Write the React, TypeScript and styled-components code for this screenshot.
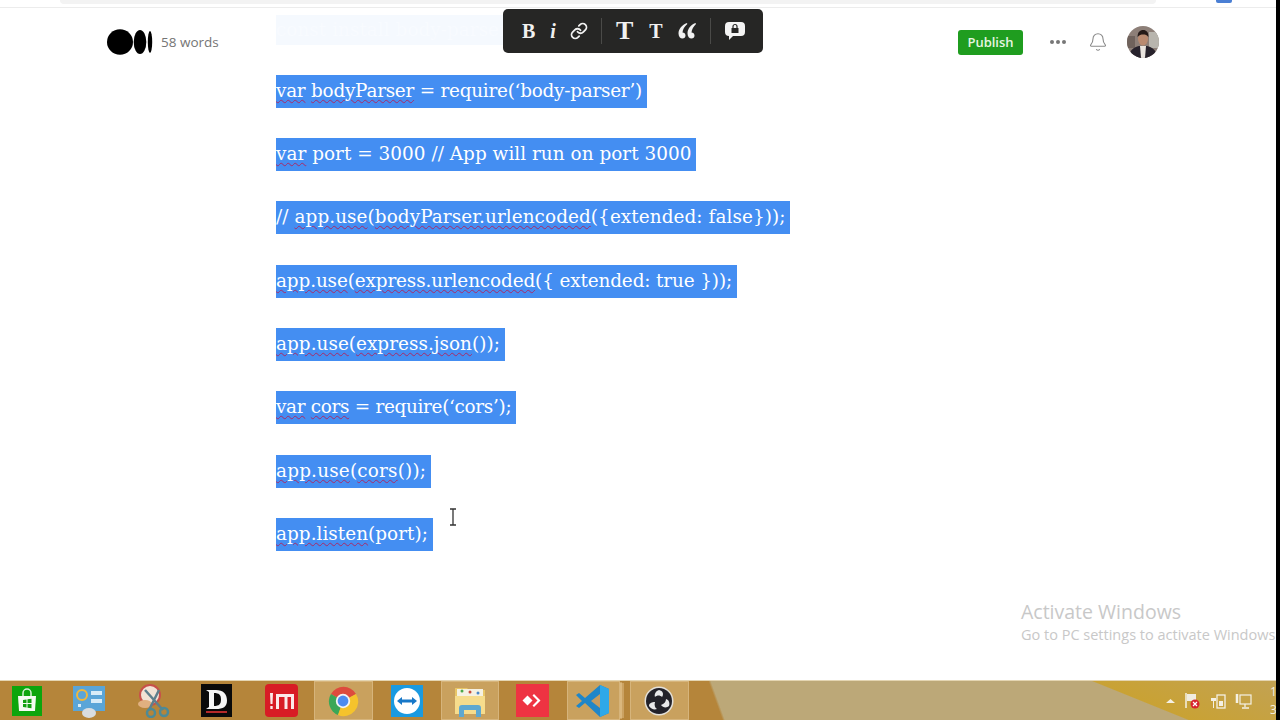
import styled, { createGlobalStyle } from "styled-components";
import { Bell, Link as LinkIcon } from "lucide-react";

const GlobalStyle = createGlobalStyle`
    html, body {
        margin : 0;
        padding : 0;
        background : #fff;
    }
    body {
        font-family : "Open Sans", "Liberation Sans", sans-serif;
    }
`;

const Screen = styled.div`
    width : 1280px;
    height : 720px;
    display : flex;
    overflow : hidden;
    background : #000;
`;

const Desktop = styled.div`
    flex : 1;
    min-width : 0;
    display : flex;
    flex-direction : column;
`;

const Browser = styled.div`
    position : relative;
    flex : 1;
    min-height : 0;
    background : #fff;
    overflow : hidden;
`;

const ChromeStrip = styled.div`
    height : 7px;
    padding : 0 44px 0 60px;
    display : flex;
    justify-content : space-between;
    border-bottom : 1px solid #ececec;
`;

const Omnibox = styled.div`
    width : 1096px;
    height : 4px;
    background : #f3f3f3;
    border-radius : 0 0 8px 8px;
`;

const Extension = styled.div`
    width : 16px;
    height : 3px;
    background : #4a7fd4;
    border-radius : 0 0 2px 2px;
`;

const MetaBar = styled.header`
    position : absolute;
    top : 25px;
    left : 107px;
    right : 117px;
    height : 34px;
    display : flex;
    align-items : center;
    gap : 8px;
`;

const Words = styled.span`
    font-size : 13.5px;
    color : #757575;
`;

const MetaActions = styled.div`
    margin-left : auto;
    display : flex;
    align-items : center;
`;

const Publish = styled.button`
    width : 65px;
    height : 25px;
    padding : 0;
    border : none;
    border-radius : 3px;
    background : #1f9d1f;
    color : #e6f5e0;
    font-family : "Open Sans", sans-serif;
    font-size : 13px;
    font-weight : 600;
`;

const Dots = styled.div`
    margin-left : 27px;
    display : flex;
    gap : 2px;
    span {
        width : 4px;
        height : 4px;
        border-radius : 50%;
        background : #777;
    }
`;

const BellWrap = styled.div`
    margin-left : 22px;
    display : flex;
    color : #8a8a8a;
`;

const Avatar = styled.div`
    margin-left : 19px;
    width : 32px;
    height : 32px;
    border-radius : 50%;
    overflow : hidden;
    svg {
        display : block;
    }
`;

const Toolbar = styled.div`
    position : absolute;
    top : 9px;
    left : 503px;
    width : 260px;
    height : 44px;
    box-sizing : border-box;
    padding-left : 19px;
    display : flex;
    align-items : center;
    background : #262625;
    border-radius : 5px;
    color : #f1f1f1;
    font-family : "Liberation Serif", serif;
`;

const ToolLetter = styled.span<{ $size: number; $left: number; $italic?: boolean }>`
    margin-left : ${(p) => p.$left}px;
    font-size : ${(p) => p.$size}px;
    font-weight : 700;
    font-style : ${(p) => (p.$italic ? "italic" : "normal")};
    line-height : 1;
`;

const ToolIcon = styled.span<{ $left: number }>`
    margin-left : ${(p) => p.$left}px;
    display : flex;
`;

const ToolDivider = styled.span<{ $left: number }>`
    margin-left : ${(p) => p.$left}px;
    width : 1px;
    height : 26px;
    background : #4a4a48;
`;

const Editor = styled.main`
    padding : 6.5px 0 0 276px;
    display : flex;
    flex-direction : column;
    align-items : flex-start;
    gap : 30.3px;
`;

const Line = styled.p<{ $faded?: boolean; $track?: number }>`
    margin : 0;
    height : ${(p) => (p.$faded ? 30 : 33)}px;
    min-width : ${(p) => (p.$faded ? 224 : 0)}px;
    overflow : hidden;
    padding-right : ${(p) => (p.$faded ? 0 : 5)}px;
    background : ${(p) => (p.$faded ? "#f5f9fe" : "#448ef2")};
    color : ${(p) => (p.$faded ? "#f8fbff" : "#fff")};
    font-family : "DejaVu Serif", serif;
    font-size : 18.4px;
    line-height : ${(p) => (p.$faded ? 30 : 31)}px;
    letter-spacing : ${(p) => p.$track ?? 0.04}px;
    white-space : pre;
`;

const Misspelt = styled.span`
    text-decoration : underline wavy #a82a68 1.2px;
    text-underline-offset : 2px;
`;

const TextCursor = styled.div`
    position : absolute;
    top : 508px;
    left : 449px;
    display : flex;
`;

const Watermark = styled.div`
    position : absolute;
    top : 599px;
    left : 1021px;
    width : 255px;
    color : #c8c8c8;
    white-space : nowrap;
`;

const WatermarkTitle = styled.div`
    font-size : 19.5px;
    line-height : 26px;
`;

const WatermarkText = styled.div`
    font-size : 14.5px;
    line-height : 20px;
`;

const Taskbar = styled.footer`
    height : 40px;
    display : flex;
    align-items : stretch;
    border-top : 1px solid #e4d5b2;
    box-sizing : border-box;
    overflow : hidden;
    background :
        linear-gradient(22deg, transparent 86.5%, #c9a234 86.7%, rgba(196, 160, 70, 0.75) 100%),
        linear-gradient(70deg, #b5853a 56%, #bca878 56.2%);
`;

const Apps = styled.div`
    display : flex;
    align-items : stretch;
`;

const AppSlot = styled.div<{ $active?: boolean; $width?: number; $stack?: boolean; $padRight?: number }>`
    width : ${(p) => p.$width ?? 63.4}px;
    padding-right : ${(p) => p.$padRight ?? 0}px;
    display : flex;
    align-items : center;
    justify-content : center;
    box-sizing : border-box;
    background : ${(p) => (p.$active ? "rgba(255, 232, 190, 0.28)" : "transparent")};
    box-shadow : ${(p) =>
        p.$active
            ? p.$stack
                ? "inset 0 0 0 1px rgba(255,240,210,.25), 3px 0 0 -1px rgba(255,232,190,.3), 6px 0 0 -2px rgba(255,232,190,.3)"
                : "inset 0 0 0 1px rgba(255,240,210,.25)"
            : "none"};
    svg {
        display : block;
    }
`;

const Tray = styled.div`
    margin-left : auto;
    display : flex;
    align-items : center;
    gap : 9px;
    color : #f4f0e4;
`;

const Clock = styled.div`
    margin-left : 9px;
    width : 6px;
    font-size : 12px;
    line-height : 18px;
    overflow : hidden;
`;

const BlackEdge = styled.div`
    width : 4px;
    background : #000;
`;

const MediumLogo = () => (
    <svg width="46" height="26" viewBox="0 0 46 26">
        <ellipse cx="13" cy="13" rx="13" ry="12.7" fill="#000" />
        <ellipse cx="33" cy="13" rx="6.3" ry="12" fill="#000" />
        <ellipse cx="43" cy="13" rx="2.2" ry="11" fill="#000" />
    </svg>
);

const Portrait = () => (
    <svg width="32" height="32" viewBox="0 0 32 32">
        <rect width="32" height="32" fill="#8d7f78" />
        <rect x="22" y="6" width="10" height="16" fill="#b8b5ae" />
        <rect x="0" y="10" width="8" height="12" fill="#6f625c" />
        <path d="M2 32c0-8 5-11 10-12h8c5 1 10 4 10 12z" fill="#27222c" />
        <path d="M13 20h6l-1 12h-4z" fill="#e9e4df" />
        <ellipse cx="16" cy="13" rx="5" ry="6.4" fill="#b98a70" />
        <path d="M10.600 11c0-5 2.400-7 5.600-7s5.400 2 5.200 7c-1.500-2-3-2.500-5.200-2.500s-4 .5-5.600 2.500z" fill="#241a18" />
    </svg>
);

const QuoteMark = () => (
    <svg width="18" height="16" viewBox="0 0 18 16">
        <path d="M9 0C4 2 .5 6 .5 10.500c0 3 1.800 5 4 5 1.800 0 3-1.200 3-3s-1.300-3-3-3c.2-3 2-6 4.800-8.500z" fill="#f1f1f1" />
        <path d="M17.500 0c-5 2-8 6-8 10.500 0 3 1.800 5 4 5 1.800 0 3-1.200 3-3s-1.300-3-3-3c.2-3 2-6 4.500-8.500z" fill="#f1f1f1" />
    </svg>
);

const BubbleLock = () => (
    <svg width="22" height="22" viewBox="0 0 22 22">
        <path d="M5 2h12a4 4 0 0 1 4 4v6a4 4 0 0 1-4 4H9l-4 4v-4a4 4 0 0 1-4-4V6a4 4 0 0 1 4-4z" fill="#f4f4f4" />
        <rect x="7.500" y="8" width="7" height="5" fill="#262625" />
        <path d="M9 8V6.500a2 2 0 0 1 4 0V8" fill="none" stroke="#262625" strokeWidth="1.2" />
    </svg>
);

const IBeam = () => (
    <svg width="8" height="18" viewBox="0 0 8 18">
        <path d="M1 1h6M1 17h6M4 1v16" stroke="#333" strokeWidth="1.300" fill="none" />
    </svg>
);

const StoreIcon = () => (
    <svg width="30" height="30" viewBox="0 0 30 30">
        <rect width="30" height="30" fill="#0da50d" />
        <path d="M6 10h18l-1 15H7z" fill="#f4fbf2" />
        <path d="M11 10V7a4 4 0 0 1 8 0v3" fill="none" stroke="#d8f0d4" strokeWidth="1.500" />
        <path d="M11 14l3.500-.5V17H11zM15.500 13.300l4-.6V17h-4zM11 18h3.500v3.500L11 21zM15.500 18h4v4.300l-4-.6z" fill="#10a010" />
    </svg>
);

const PanelIcon = () => (
    <svg width="34" height="34" viewBox="0 0 34 34">
        <rect x="0" y="2" width="32" height="25" fill="#5aa5d8" />
        <circle cx="9" cy="11" r="5" fill="none" stroke="#f0b73c" strokeWidth="2" />
        <rect x="18" y="7" width="11" height="4" fill="#d8ecf8" />
        <rect x="18" y="15" width="11" height="4" fill="#d8ecf8" />
        <rect x="5" y="20" width="3" height="3" fill="#d8ecf8" />
        <ellipse cx="16" cy="29" rx="7" ry="5" fill="#d9dde0" />
    </svg>
);

const SnipIcon = () => (
    <svg width="34" height="34" viewBox="0 0 34 34">
        <circle cx="13" cy="11" r="10" fill="#f2e2d4" stroke="#c8504a" strokeWidth="2" />
        <ellipse cx="8" cy="20" rx="7" ry="4" fill="#e0b080" />
        <path d="M8 6l18 20M22 6L12 26" stroke="#5f7f8c" strokeWidth="2.500" />
        <circle cx="27" cy="28" r="4" fill="none" stroke="#4d8a96" strokeWidth="2.500" />
        <circle cx="14" cy="29" r="4" fill="none" stroke="#4d8a96" strokeWidth="2.500" />
    </svg>
);

const DaemonIcon = () => (
    <svg width="31" height="33" viewBox="0 0 31 33">
        <rect width="31" height="33" fill="#0a0a0a" />
        <path d="M5 6h10c7 0 11 4 11 10.500S22 25 15 25H5l3-2V8z" fill="#f5f5f5" />
        <path d="M13 9v13c5 0 7-2 7-6.500S18 9 13 9z" fill="#0a0a0a" />
        <rect x="5" y="27" width="21" height="2" fill="#b52a2a" />
    </svg>
);

const ImIcon = () => (
    <svg width="33" height="33" viewBox="0 0 33 33">
        <rect width="33" height="33" rx="4" fill="#d81c25" />
        <path d="M5 9h3l-.5 11H5.500zM5.300 22h2.400v3H5.300zM11 10h18v15h-3V13h-3.500v12h-3V13H14v12h-3z" fill="#fbe9e9" />
    </svg>
);

const ChromeIcon = () => (
    <svg width="32" height="32" viewBox="0 0 32 32">
        <path d="M16 16L4 9A14.500 14.500 0 0 1 29 9z" fill="#dd4b3e" />
        <path d="M16 16L4 9A14.500 14.500 0 0 0 11 30z" fill="#3aa757" />
        <path d="M16 16L29 9A14.500 14.500 0 0 1 11 30z" fill="#f5c32c" />
        <circle cx="16" cy="16" r="7.200" fill="#f4f4f4" />
        <circle cx="16" cy="16" r="5.400" fill="#4c8bf0" />
    </svg>
);

const ViewerIcon = () => (
    <svg width="32" height="32" viewBox="0 0 32 32">
        <rect width="32" height="32" fill="#1a9ae0" />
        <circle cx="16" cy="16" r="13" fill="#fff" />
        <path d="M6 16l5-4v2.500h10V12l5 4-5 4v-2.500H11V20z" fill="#1878c8" />
    </svg>
);

const FolderIcon = () => (
    <svg width="32" height="32" viewBox="0 0 32 32">
        <path d="M1 3h12l2 2h16v24H1z" fill="#e8c566" />
        <rect x="3" y="4" width="26" height="7" fill="#f5f1e2" />
        <circle cx="8" cy="6" r="1.500" fill="#4aa84a" />
        <circle cx="16" cy="7" r="1.500" fill="#c84a3a" />
        <circle cx="24" cy="8" r="1.500" fill="#4a88c8" />
        <path d="M1 11h30v18H1z" fill="#f6dc8c" />
        <path d="M5 32v-9a3 3 0 0 1 3-3h16a3 3 0 0 1 3 3v9h-5v-7H10v7z" fill="#5fa8d0" />
    </svg>
);

const DeskIcon = () => (
    <svg width="33" height="33" viewBox="0 0 33 33">
        <rect width="33" height="33" fill="#ee3342" />
        <path d="M11.500 11.500l5 5-5 5-5-5z" fill="#fff" />
        <path d="M18 10l6.500 6.500L18 23l-1.500-1.500 5-5-5-5z" fill="#fff" />
    </svg>
);

const CodeIcon = () => (
    <svg width="34" height="34" viewBox="0 0 34 34">
        <path d="M24 1l9 4v24l-9 4L9 19l-6 5-3-2 6-5-6-6 3-2 6 5z" fill="#1f86c8" />
        <path d="M24 1l9 4v24l-9 4z" fill="#2ea8e8" />
        <path d="M24 10v14l-9-7z" fill="#c49c60" />
    </svg>
);

const ObsIcon = () => (
    <svg width="30" height="30" viewBox="0 0 30 30">
        <circle cx="15" cy="15" r="14.500" fill="#e4e0d8" />
        <circle cx="15" cy="15" r="13" fill="#23222a" />
        <path d="M15 4c-3 1-5 4-4 7 2-2 5-2 7 0 2-3 1-6-3-7zM5 20c2 3 5 4 8 3-2-1-3-4-2-7-3 0-6 1-6 4zM25 20c1-3 0-6-3-7 0 3-2 5-5 6 2 3 6 3 8 1z" fill="#e8e8ea" />
    </svg>
);

const TrayCaret = () => (
    <svg width="9" height="6" viewBox="0 0 9 6">
        <path d="M0 5l4.500-4L9 5z" fill="#f4f0e4" />
    </svg>
);

const TrayFlag = () => (
    <svg width="16" height="17" viewBox="0 0 16 17">
        <path d="M2 1v15" stroke="#f4f0e4" strokeWidth="1.500" />
        <path d="M3 2h9v7H3z" fill="#f0ece0" />
        <circle cx="11" cy="12" r="4.500" fill="#d8232f" />
        <path d="M9 10l4 4M13 10l-4 4" stroke="#fff" strokeWidth="1.200" />
    </svg>
);

const TrayBattery = () => (
    <svg width="17" height="16" viewBox="0 0 17 16">
        <rect x="8" y="2" width="8" height="13" fill="none" stroke="#f4f0e4" strokeWidth="1.300" />
        <rect x="10" y="8" width="4" height="5" fill="#f4f0e4" />
        <path d="M3 1v4M6 1v4M2 5h5v3H5v7H4V8H2z" fill="#f4f0e4" />
    </svg>
);

const TrayNetwork = () => (
    <svg width="17" height="16" viewBox="0 0 17 16">
        <rect x="5" y="2" width="11" height="9" fill="none" stroke="#f4f0e4" strokeWidth="1.200" />
        <path d="M10 11v3M7 15h7" stroke="#f4f0e4" strokeWidth="1.300" />
        <path d="M2 1v9" stroke="#f4f0e4" strokeWidth="2.500" />
    </svg>
);

export default function App() {
    return (
        <Screen>
            <GlobalStyle />
            <Desktop>
                <Browser>
                    <ChromeStrip>
                        <Omnibox />
                        <Extension />
                    </ChromeStrip>

                    <Editor>
                        <Line $faded>{"const install body-parser"}</Line>
                        <Line $track={-0.24}><Misspelt>var</Misspelt> <Misspelt>bodyParser</Misspelt> = require(‘body-parser’)</Line>
                        <Line><Misspelt>var</Misspelt> port = 3000 // App will run on port 3000</Line>
                        <Line $track={0.08}>// <Misspelt>app.use</Misspelt>(<Misspelt>bodyParser.urlencoded</Misspelt>({"{"}extended: false{"}"}));</Line>
                        <Line $track={-0.12}><Misspelt>app.use</Misspelt>(<Misspelt>express.urlencoded</Misspelt>({"{"} extended: true {"}"}));</Line>
                        <Line><Misspelt>app.use</Misspelt>(<Misspelt>express.json</Misspelt>());</Line>
                        <Line $track={-0.3}><Misspelt>var</Misspelt> <Misspelt>cors</Misspelt> = require(‘cors’);</Line>
                        <Line $track={0.2}><Misspelt>app.use</Misspelt>(<Misspelt>cors</Misspelt>());</Line>
                        <Line><Misspelt>app.listen</Misspelt>(port);</Line>
                    </Editor>

                    <MetaBar>
                        <MediumLogo />
                        <Words>58 words</Words>
                        <MetaActions>
                            <Publish>Publish</Publish>
                            <Dots><span /><span /><span /></Dots>
                            <BellWrap><Bell size={20} strokeWidth={1.3} /></BellWrap>
                            <Avatar><Portrait /></Avatar>
                        </MetaActions>
                    </MetaBar>

                    <Toolbar>
                        <ToolLetter $size={20} $left={0}>B</ToolLetter>
                        <ToolLetter $size={20} $left={15} $italic>i</ToolLetter>
                        <ToolIcon $left={14}><LinkIcon size={18} strokeWidth={2.4} /></ToolIcon>
                        <ToolDivider $left={13} />
                        <ToolLetter $size={26} $left={14}>T</ToolLetter>
                        <ToolLetter $size={20} $left={16}>T</ToolLetter>
                        <ToolIcon $left={15}><QuoteMark /></ToolIcon>
                        <ToolDivider $left={14} />
                        <ToolIcon $left={13}><BubbleLock /></ToolIcon>
                    </Toolbar>

                    <TextCursor><IBeam /></TextCursor>

                    <Watermark>
                        <WatermarkTitle>Activate Windows</WatermarkTitle>
                        <WatermarkText>Go to PC settings to activate Windows</WatermarkText>
                    </Watermark>
                </Browser>

                <Taskbar>
                    <Apps>
                        <AppSlot $width={58.5} $padRight={5}><StoreIcon /></AppSlot>
                        <AppSlot><PanelIcon /></AppSlot>
                        <AppSlot><SnipIcon /></AppSlot>
                        <AppSlot><DaemonIcon /></AppSlot>
                        <AppSlot $width={65}><ImIcon /></AppSlot>
                        <AppSlot $active $width={59}><ChromeIcon /></AppSlot>
                        <AppSlot $width={68}><ViewerIcon /></AppSlot>
                        <AppSlot $active $width={58}><FolderIcon /></AppSlot>
                        <AppSlot $width={68}><DeskIcon /></AppSlot>
                        <AppSlot $active $stack $width={53}><CodeIcon /></AppSlot>
                        <AppSlot $width={10} />
                        <AppSlot $active $width={59}><ObsIcon /></AppSlot>
                    </Apps>
                    <Tray>
                        <TrayCaret />
                        <TrayFlag />
                        <TrayBattery />
                        <TrayNetwork />
                        <Clock>1<br />3</Clock>
                    </Tray>
                </Taskbar>
            </Desktop>
            <BlackEdge />
        </Screen>
    );
}
